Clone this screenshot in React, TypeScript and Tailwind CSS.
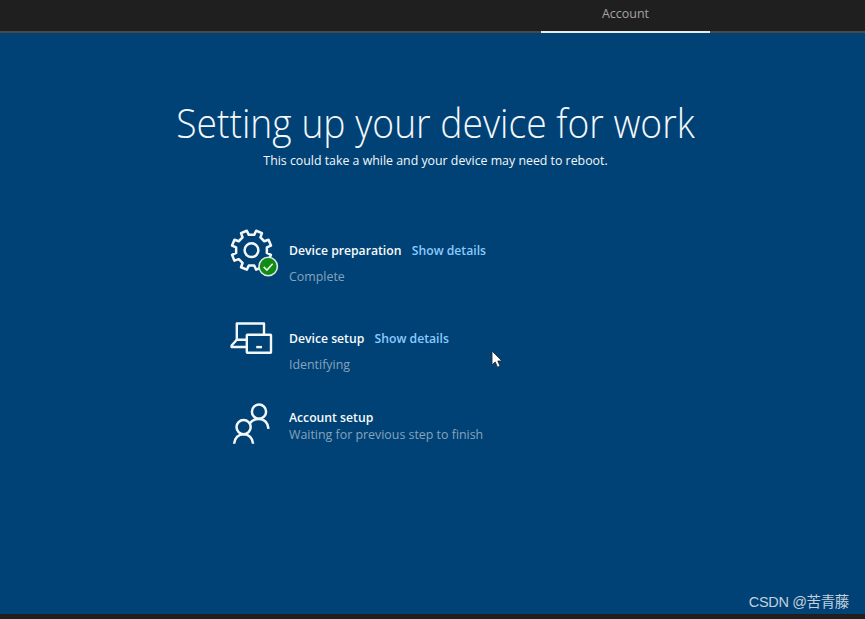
import type { ReactNode } from 'react';

interface SetupStepProps {
  icon: ReactNode;
  title: string;
  status: string;
  hasDetails?: boolean;
  className?: string;
}

function gearPath(teeth: number, outer: number, inner: number) {
  const step = 360 / teeth;
  const points: string[] = [];
  for (let i = 0; i < teeth; i++) {
    const center = -90 + step / 2 + i * step;
    const corners = [
      [inner, -12.5],
      [outer, -9],
      [outer, 9],
      [inner, 12.5],
    ];
    for (const [radius, offset] of corners) {
      const angle = ((center + offset) * Math.PI) / 180;
      points.push(`${(radius * Math.cos(angle)).toFixed(2)} ${(radius * Math.sin(angle)).toFixed(2)}`);
    }
  }
  return `M${points.join('L')}Z`;
}

function GearIcon() {
  return (
    <svg className="h-[52px] w-[52px]" viewBox="0 0 52 52" fill="none" aria-hidden="true">
      <g transform="translate(23.5 24.2)" stroke="#f4f7fa" strokeWidth="2.5" strokeLinejoin="round">
        <path d={gearPath(8, 20, 15.6)} />
        <circle r="6.9" />
      </g>
      <circle cx="40.2" cy="40.5" r="9.2" fill="#118a16" stroke="#dce8e2" strokeWidth="1.6" />
      <path d="M35.7 40.9l3.2 3.1 5.8-6.3" stroke="#e9f5ea" strokeWidth="1.6" />
    </svg>
  );
}

function DevicesIcon() {
  return (
    <svg className="h-[52px] w-[52px]" viewBox="0 0 52 52" fill="none" stroke="#f4f7fa" strokeWidth="2.4" strokeLinejoin="round" aria-hidden="true">
      <path d="M36 21.5V9.5H8.8V25.8H18.5" />
      <path d="M8.8 25.8L3.6 31.5V33H18.5" />
      <rect x="18.8" y="20.8" width="24.2" height="17.9" rx="0.5" />
      <path d="M28.2 33.1h5.8" />
    </svg>
  );
}

function PeopleIcon() {
  return (
    <svg className="h-[56px] w-[52px]" viewBox="0 0 52 56" fill="none" stroke="#f4f7fa" strokeWidth="2.5" aria-hidden="true">
      <circle cx="31" cy="17.7" r="7.1" />
      <circle cx="15.6" cy="33.1" r="7.1" />
      <path d="M21.9 29.5C23.4 26.8 27 24.9 31 24.9c5.2 0 9.2 4 9.5 10" />
      <path d="M6.1 49.8C6.4 44.2 10.4 40.3 15.6 40.3s9.2 3.9 9.5 9.5" />
    </svg>
  );
}

function SetupStep({ icon, title, status, hasDetails = false, className = '' }: SetupStepProps) {
  return (
    <li className={`flex ${className}`}>
      <div className="w-[61px] shrink-0">{icon}</div>
      <div className={hasDetails ? 'pt-[14px]' : 'pt-[13px]'}>
        <div className="flex origin-left scale-x-[0.938] gap-[11px] text-[13px] leading-5 font-semibold">
          <h2 className="text-[#f8fafc]">{title}</h2>
          {hasDetails && (
            <button type="button" className="text-[#8bcaff]">
              Show details
            </button>
          )}
        </div>
        <p className={`origin-left scale-x-[0.953] text-[13px] leading-5 text-[#86a4be] ${hasDetails ? 'mt-1.5' : '-mt-[3px]'}`}>{status}</p>
      </div>
    </li>
  );
}

function Cursor() {
  return (
    <svg className="absolute top-[350px] left-[491px] h-[19px] w-3" viewBox="0 0 12 19" aria-hidden="true">
      <path d="M1 1v14l3.2-3 2.3 5.3 2.6-1.1L6.8 11H11z" fill="#fff" stroke="#202b38" strokeWidth="0.9" />
    </svg>
  );
}

export default function App() {
  return (
    <div className="relative flex h-[619px] w-[865px] flex-col overflow-hidden bg-[#004275] font-['Open_Sans','Noto_Sans_CJK_SC',sans-serif]">
      <header className="flex h-[33px] shrink-0 border-b-2 border-[#47494b] bg-[#1f1f1f]">
        <div className="ml-[541px] h-[33px] w-[169px] border-b-2 border-[#e6ebee] pt-[3px] text-center text-[#a4a4a4]">
          <p className="scale-x-[0.96] text-[13px] leading-5">Account</p>
        </div>
      </header>

      <main className="flex-1">
        <div className="pt-[62px] pl-[6px] text-center text-[#f4f7fa]">
          <h1 className="scale-x-[0.931] text-[40px] leading-[56px] font-light whitespace-nowrap">Setting up your device for work</h1>
          <p className="-mt-px scale-x-[0.95] text-[13px] leading-5">This could take a while and your device may need to reboot.</p>
        </div>

        <ul className="mt-[56px] ml-[228px]">
          <SetupStep className="h-[87.5px]" icon={<GearIcon />} title="Device preparation" status="Complete" hasDetails />
          <SetupStep className="h-[80px]" icon={<DevicesIcon />} title="Device setup" status="Identifying" hasDetails />
          <SetupStep icon={<PeopleIcon />} title="Account setup" status="Waiting for previous step to finish" />
        </ul>
      </main>

      <footer className="shrink-0">
        <p className="pr-4 pb-px text-right font-['Liberation_Sans','Noto_Sans_CJK_SC',sans-serif] text-[14.5px] leading-[22px] tracking-[-0.35px] text-[#c3d0dc]">CSDN @苦青藤</p>
        <div className="h-[5px] bg-[#1f1f1f]" />
      </footer>

      <Cursor />
    </div>
  );
}
